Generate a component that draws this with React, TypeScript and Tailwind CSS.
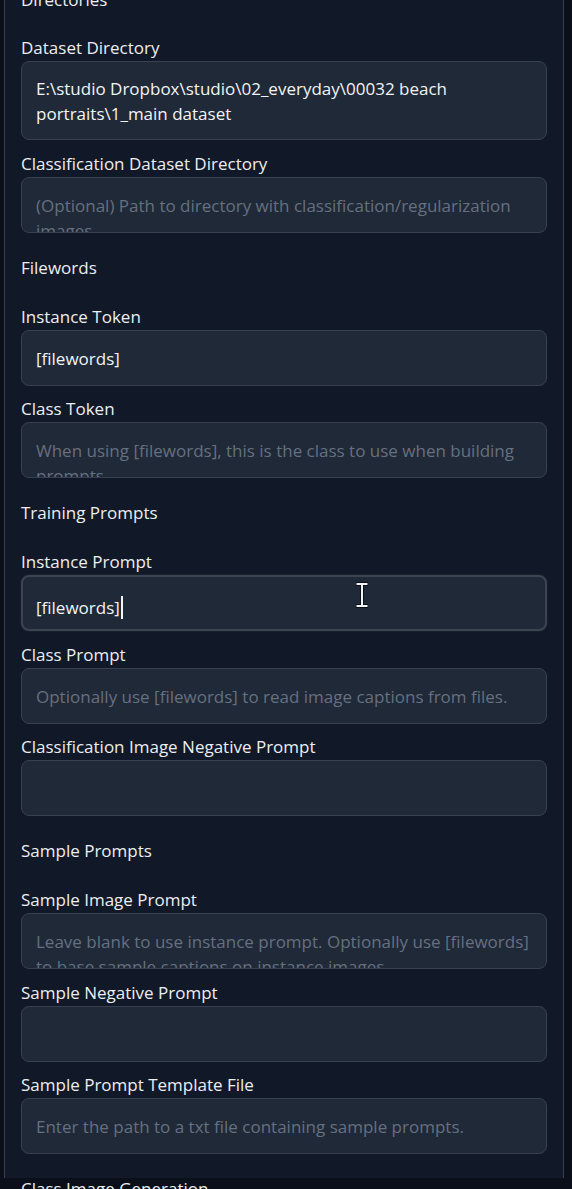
import React from "react";

type Field = {
  label: string;
  value?: string;
  placeholder?: string;
  tall?: boolean;
  focused?: boolean;
};

type Section = { title: string; fields: Field[] };

const sections: Section[] = [
  {
    title: "Directories",
    fields: [
      {
        label: "Dataset Directory",
        value: "E:\\studio Dropbox\\studio\\02_everyday\\00032 beach portraits\\1_main dataset",
        tall: true,
      },
      {
        label: "Classification Dataset Directory",
        placeholder: "(Optional) Path to directory with classification/regularization images",
      },
    ],
  },
  {
    title: "Filewords",
    fields: [
      { label: "Instance Token", value: "[filewords]" },
      {
        label: "Class Token",
        placeholder: "When using [filewords], this is the class to use when building prompts",
      },
    ],
  },
  {
    title: "Training Prompts",
    fields: [
      { label: "Instance Prompt", value: "[filewords]", focused: true },
      { label: "Class Prompt", placeholder: "Optionally use [filewords] to read image captions from files." },
      { label: "Classification Image Negative Prompt" },
    ],
  },
  {
    title: "Sample Prompts",
    fields: [
      {
        label: "Sample Image Prompt",
        placeholder:
          "Leave blank to use instance prompt. Optionally use [filewords] to base sample captions on instance images.",
      },
      { label: "Sample Negative Prompt" },
      { label: "Sample Prompt Template File", placeholder: "Enter the path to a txt file containing sample prompts." },
    ],
  },
  { title: "Class Image Generation", fields: [] },
];

function TextCursor() {
  // mouse I-beam hovering over the focused box
  return (
    <svg className="pointer-events-none absolute left-[333px] top-[7px]" width="16" height="26" viewBox="0 0 16 26" aria-hidden>
      <path d="M2 2h12M8 2v22M2 24h12" stroke="#0b0f19" strokeWidth="4" fill="none" />
      <path d="M2.5 2h11M8 2v22M2.5 24h11" stroke="#f3f4f6" strokeWidth="2" fill="none" />
    </svg>
  );
}

function InputField({ field }: { field: Field }) {
  const box = field.focused
    ? "border-2 border-[#3b4452] shadow-[0_0_0_1px_#1a2029] px-[13px] py-[14px]"
    : "border border-[#374151] px-[14px] py-[15px]";

  return (
    <label className="flex flex-col gap-[2px]">
      <span className="h-[22px] leading-[22px] text-[17px] text-[#eceef1]">{field.label}</span>
      <div className="relative">
        {field.focused ? (
          <div className={`h-[56px] rounded-[8px] bg-[#1f2937] text-[17px] leading-6 text-[#f3f4f6] ${box}`}>
            {field.value}
            <span className="ml-[1px] inline-block h-[23px] w-[2px] translate-y-[5px] bg-[#f3f4f6]" />
            <TextCursor />
          </div>
        ) : (
          <textarea
            readOnly
            defaultValue={field.value}
            placeholder={field.placeholder}
            className={`block w-full resize-none overflow-hidden rounded-[8px] bg-[#1f2937] text-[17px] leading-[25px] text-[#f3f4f6] outline-none placeholder:text-[#667080] ${
              field.tall ? "h-[79px] pt-[14px]" : "h-[56px]"
            } ${box}`}
          />
        )}
      </div>
    </label>
  );
}

export default function App() {
  return (
    <div className="h-[1189px] overflow-hidden bg-[#0b0f19] font-['Open_Sans',sans-serif] antialiased">
      <div className="ml-[4px] h-full w-[560px] border-x border-[#374151] bg-[#111827] px-4">
        <div className="-mt-[11px] flex flex-col gap-[12.5px]">
          {sections.map((section, i) => (
            <React.Fragment key={section.title}>
              <h3
                className={`h-[22px] text-[17px] leading-[22px] text-[#eceef1] ${
                  i === 0 ? "mb-[13.5px]" : "mt-[11.5px] mb-[14.5px]"
                }`}
              >
                {section.title}
              </h3>
              {section.fields.map((f) => (
                <InputField key={f.label} field={f} />
              ))}
            </React.Fragment>
          ))}
        </div>
      </div>
    </div>
  );
}
